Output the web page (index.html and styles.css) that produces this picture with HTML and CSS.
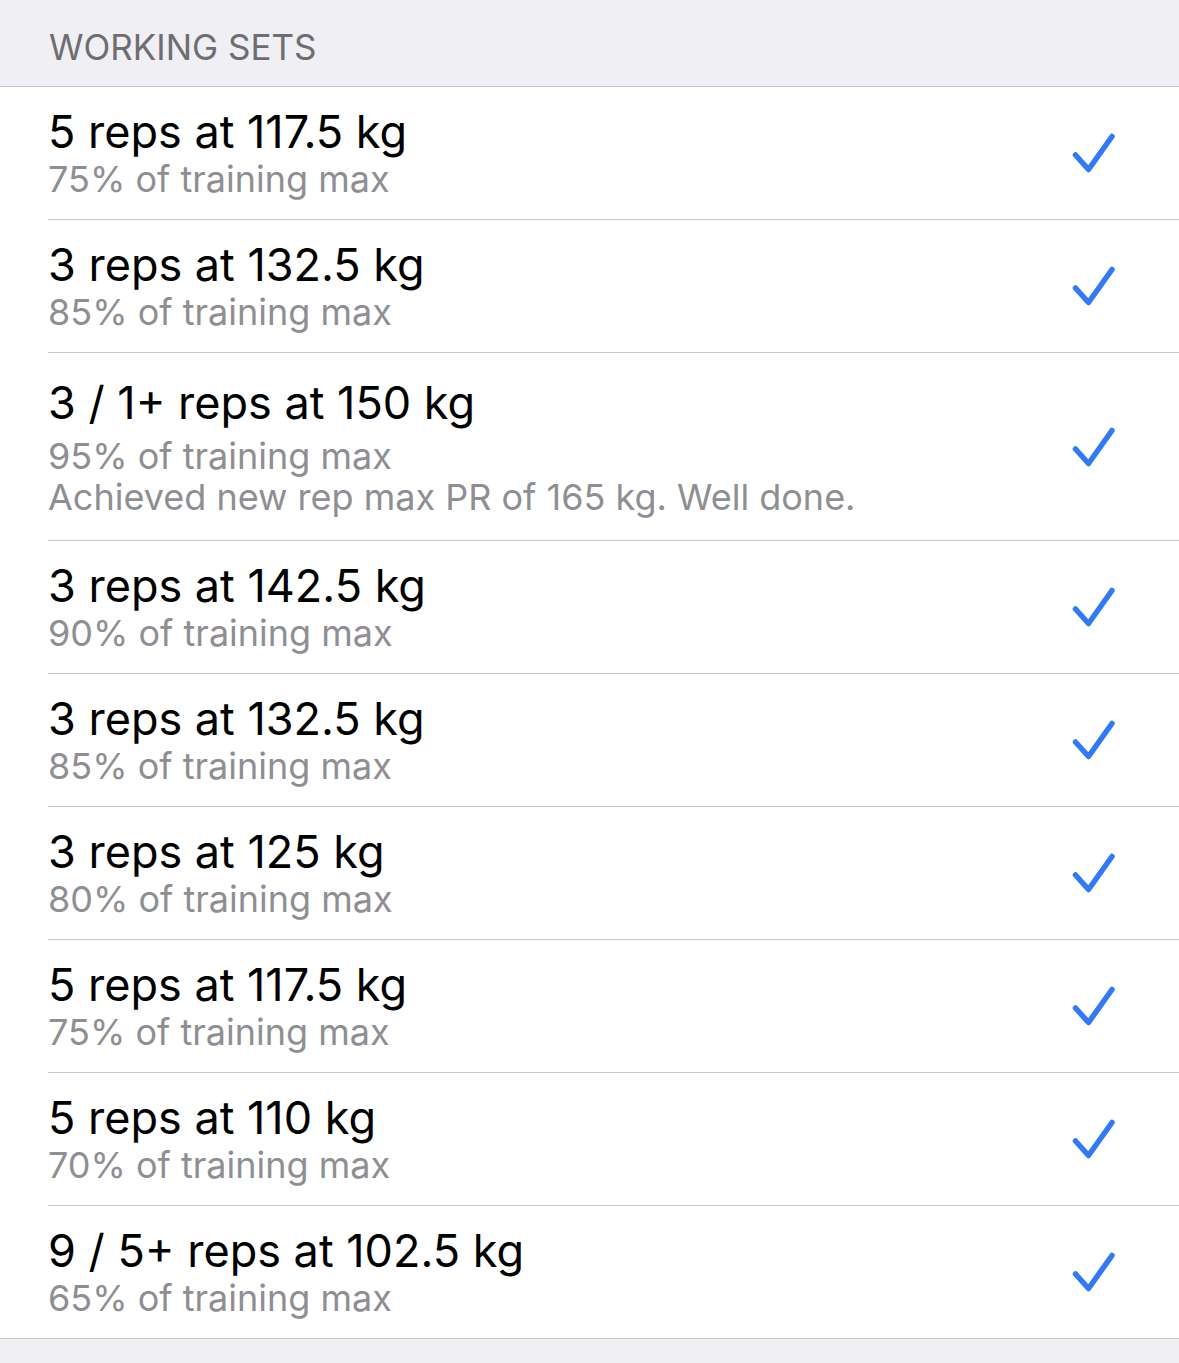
FILE: index.html
```html
<!DOCTYPE html>
<html lang="en">
<head>
<meta charset="UTF-8">
<meta name="viewport" content="width=device-width, initial-scale=1.0">
<title>Working sets</title>
<link rel="stylesheet" href="styles.css">
</head>
<body>
<div class="section-header">WORKING SETS</div>
<ul class="set-list">
    <li class="set-row">
        <div class="set-cell">
            <div class="set-text">
                <div class="set-title">5 reps at 117.5 kg</div>
                <div class="set-sub">75% of training max</div>
            </div>
            <svg class="check" viewBox="0 0 44 40"><path d="M3.5 22 L16.5 36.5 L40 3.5"/></svg>
        </div>
    </li>
    <li class="set-row">
        <div class="set-cell">
            <div class="set-text">
                <div class="set-title">3 reps at 132.5 kg</div>
                <div class="set-sub">85% of training max</div>
            </div>
            <svg class="check" viewBox="0 0 44 40"><path d="M3.5 22 L16.5 36.5 L40 3.5"/></svg>
        </div>
    </li>
    <li class="set-row tall">
        <div class="set-cell">
            <div class="set-text">
                <div class="set-title">3 / 1+ reps at 150 kg</div>
                <div class="set-sub">95% of training max</div>
                <div class="set-note">Achieved new rep max PR of 165 kg. Well done.</div>
            </div>
            <svg class="check" viewBox="0 0 44 40"><path d="M3.5 22 L16.5 36.5 L40 3.5"/></svg>
        </div>
    </li>
    <li class="set-row">
        <div class="set-cell">
            <div class="set-text">
                <div class="set-title">3 reps at 142.5 kg</div>
                <div class="set-sub">90% of training max</div>
            </div>
            <svg class="check" viewBox="0 0 44 40"><path d="M3.5 22 L16.5 36.5 L40 3.5"/></svg>
        </div>
    </li>
    <li class="set-row">
        <div class="set-cell">
            <div class="set-text">
                <div class="set-title">3 reps at 132.5 kg</div>
                <div class="set-sub">85% of training max</div>
            </div>
            <svg class="check" viewBox="0 0 44 40"><path d="M3.5 22 L16.5 36.5 L40 3.5"/></svg>
        </div>
    </li>
    <li class="set-row">
        <div class="set-cell">
            <div class="set-text">
                <div class="set-title">3 reps at 125 kg</div>
                <div class="set-sub">80% of training max</div>
            </div>
            <svg class="check" viewBox="0 0 44 40"><path d="M3.5 22 L16.5 36.5 L40 3.5"/></svg>
        </div>
    </li>
    <li class="set-row">
        <div class="set-cell">
            <div class="set-text">
                <div class="set-title">5 reps at 117.5 kg</div>
                <div class="set-sub">75% of training max</div>
            </div>
            <svg class="check" viewBox="0 0 44 40"><path d="M3.5 22 L16.5 36.5 L40 3.5"/></svg>
        </div>
    </li>
    <li class="set-row">
        <div class="set-cell">
            <div class="set-text">
                <div class="set-title">5 reps at 110 kg</div>
                <div class="set-sub">70% of training max</div>
            </div>
            <svg class="check" viewBox="0 0 44 40"><path d="M3.5 22 L16.5 36.5 L40 3.5"/></svg>
        </div>
    </li>
    <li class="set-row last">
        <div class="set-cell">
            <div class="set-text">
                <div class="set-title">9 / 5+ reps at 102.5 kg</div>
                <div class="set-sub">65% of training max</div>
            </div>
            <svg class="check" viewBox="0 0 44 40"><path d="M3.5 22 L16.5 36.5 L40 3.5"/></svg>
        </div>
    </li>
</ul>
</body>
</html>
```

FILE: styles.css
```css
body {
    font-family: Inter, "Liberation Sans", sans-serif;
    background-color: #efeff4;
    margin: 0;
    padding: 0;
}

.section-header {
    height: 87px;
    box-sizing: border-box;
    padding: 27px 0 0 49px;
    font-size: 35px;
    line-height: 40px;
    color: #6d6d72;
    border-bottom: 1px solid #c8c7cc;
}

.set-list {
    list-style: none;
    margin: 0;
    padding: 0;
    background-color: #fff;
    border-bottom: 1px solid #c8c7cc;
}

.set-row {
    padding-left: 48px;
}

.set-cell {
    display: flex;
    align-items: center;
    min-height: 132px;
    padding: 0 63px 0 0;
    border-bottom: 1px solid #c8c7cc;
}

.set-row.last .set-cell {
    border-bottom: none;
}

.set-row.tall .set-cell {
    min-height: 187px;
}

.set-text {
    flex: 1;
}

.set-title {
    font-size: 45px;
    line-height: 52px;
    color: #000;
}

.set-sub,
.set-note {
    font-size: 36px;
    line-height: 42px;
    color: #8e8e93;
}

.tall .set-sub {
    margin-top: 6px;
}

.set-note {
    line-height: 40px;
}

.check {
    width: 44px;
    height: 40px;
    fill: none;
    stroke: #3179f5;
    stroke-width: 5.5;
    stroke-linecap: round;
    stroke-linejoin: round;
}
```
